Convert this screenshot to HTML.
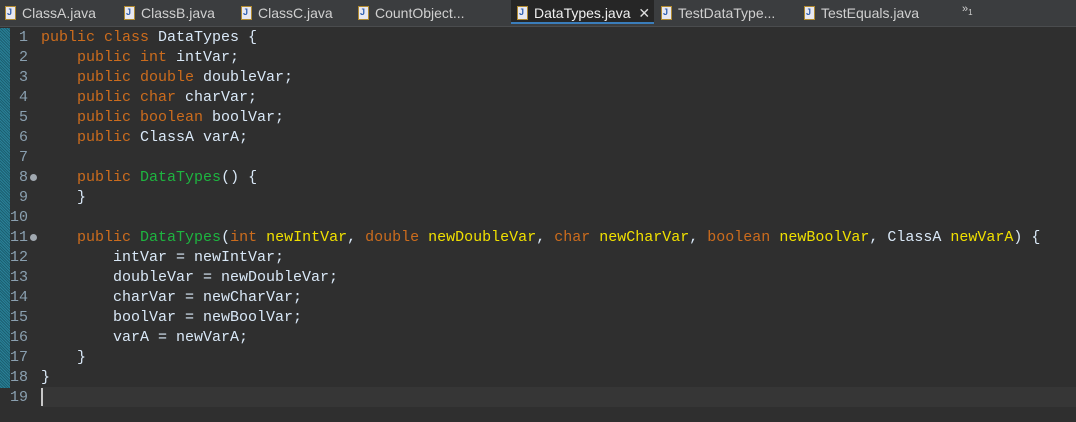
<!DOCTYPE html><html><head><style>
body{margin:0;width:1076px;height:422px;background:#2f2f2f;overflow:hidden;font-family:"Liberation Sans",sans-serif}
.tabs{position:absolute;left:0;top:0;width:1076px;height:26px;background:#3b3d3f;border-bottom:1px solid #4a4c4e}
.tab{position:absolute;top:0;height:26px;line-height:27px;color:#d0d0d0;font-size:14px;white-space:nowrap}
.ic{display:inline-block;width:9px;height:12px;background:#e8e8f0;border:1px solid #b08a30;vertical-align:-2px;margin-right:6px;position:relative}
.ic:after{content:"J";position:absolute;left:1px;top:-8px;font-size:9px;color:#3060b0;font-weight:bold}
.act{background:#262626;border-bottom:2px solid #3a7dbb;height:24px;color:#f0f0f0}
.strip{position:absolute;left:0;top:28px;width:10px;height:360px;background:repeating-linear-gradient(45deg,#1b5f70 0 1px,#2a8098 1px 2px)}
.cur{position:absolute;left:42px;top:387px;width:1034px;height:20px;background:#363636}
.caret{position:absolute;left:41px;top:388px;width:2px;height:18px;background:#c8c8c8}
.ln{position:absolute;left:0;top:28px;width:28px;text-align:right;font:15px/20px "Liberation Mono",monospace;color:#8aa0b0}
.code{position:absolute;left:41px;top:28px;font:15px/20px "Liberation Mono",monospace;color:#d9e8f7;white-space:pre}
.k{color:#cc6c1d}.m{color:#1eb540}.p{color:#f0e000}
.dot{position:absolute;left:30px;width:7px;height:7px;border-radius:50%;background:#a0a8b0}
</style></head><body>
<div class="tabs">
<div class="tab" style="left:5px"><span class="ic"></span>ClassA.java</div>
<div class="tab" style="left:124px"><span class="ic"></span>ClassB.java</div>
<div class="tab" style="left:241px"><span class="ic"></span>ClassC.java</div>
<div class="tab" style="left:358px"><span class="ic"></span>CountObject...</div>
<div class="tab act" style="left:511px;width:143px;padding-left:6px;box-sizing:border-box"><span class="ic"></span>DataTypes.java <span style="margin-left:4px;color:#ddd">✕</span></div>
<div class="tab" style="left:661px"><span class="ic"></span>TestDataType...</div>
<div class="tab" style="left:804px"><span class="ic"></span>TestEquals.java</div>
<div class="tab" style="left:962px;font-size:11px;line-height:18px">»<sub style="font-size:8px">1</sub></div>
</div>
<div class="strip"></div>
<div class="cur"></div><div class="caret"></div>
<div class="dot" style="top:174px"></div><div class="dot" style="top:234px"></div>
<div class="ln">1<br>2<br>3<br>4<br>5<br>6<br>7<br>8<br>9<br>10<br>11<br>12<br>13<br>14<br>15<br>16<br>17<br>18<br>19</div>
<div class="code"><span class="k">public class</span> DataTypes {
    <span class="k">public int</span> intVar;
    <span class="k">public double</span> doubleVar;
    <span class="k">public char</span> charVar;
    <span class="k">public boolean</span> boolVar;
    <span class="k">public</span> ClassA varA;

    <span class="k">public</span> <span class="m">DataTypes</span>() {
    }

    <span class="k">public</span> <span class="m">DataTypes</span>(<span class="k">int</span> <span class="p">newIntVar</span>, <span class="k">double</span> <span class="p">newDoubleVar</span>, <span class="k">char</span> <span class="p">newCharVar</span>, <span class="k">boolean</span> <span class="p">newBoolVar</span>, ClassA <span class="p">newVarA</span>) {
        intVar = newIntVar;
        doubleVar = newDoubleVar;
        charVar = newCharVar;
        boolVar = newBoolVar;
        varA = newVarA;
    }
}
</div>
</body></html>
